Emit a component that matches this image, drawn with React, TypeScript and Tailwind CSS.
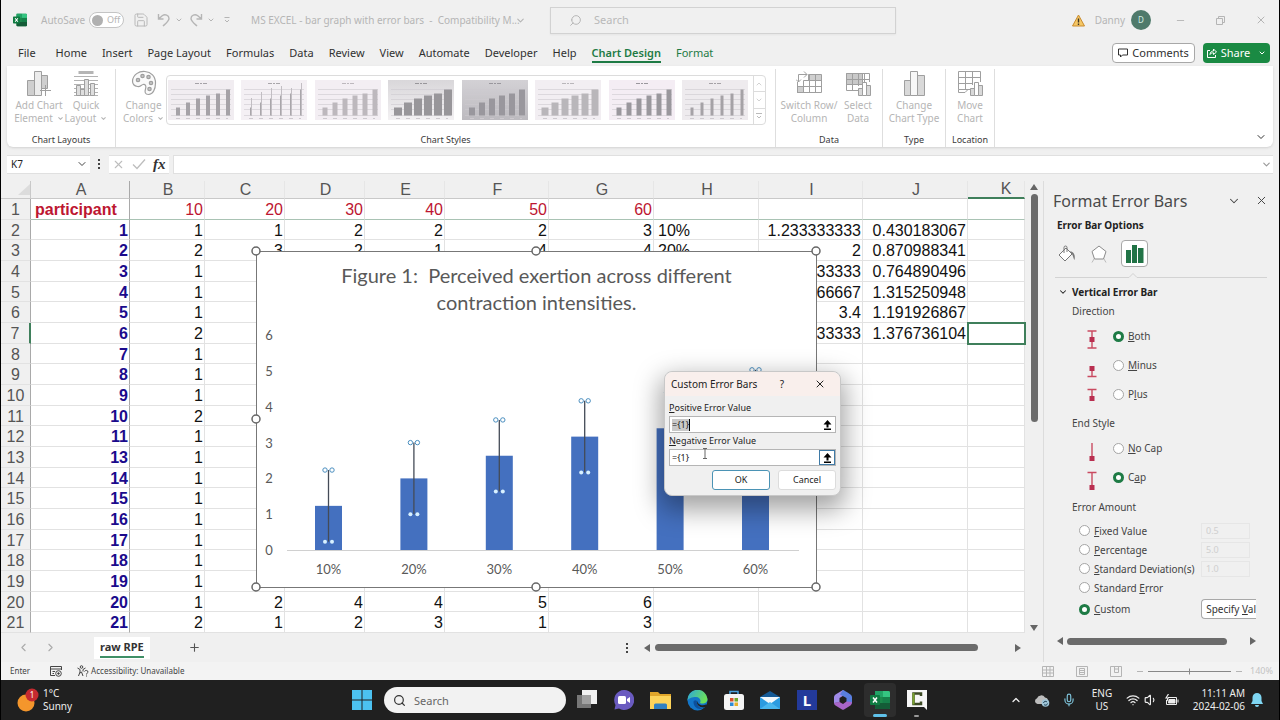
import type { ReactNode } from 'react';
import {
  ChevronDown,
  ChevronLeft,
  ChevronRight,
  ChevronUp,
  Mic,
  Minus,
  Plus,
  Save,
  Search,
  Volume1,
  Wifi,
  X,
} from 'lucide-react';

const TABS = [
  'Home',
  'Insert',
  'Page Layout',
  'Formulas',
  'Data',
  'Review',
  'View',
  'Automate',
  'Developer',
  'Help',
];

const COLUMNS = [
  { id: 'A', width: 'w-[99px]' },
  { id: 'B', width: 'w-[75px]' },
  { id: 'C', width: 'w-20' },
  { id: 'D', width: 'w-20' },
  { id: 'E', width: 'w-20' },
  { id: 'F', width: 'w-[104px]' },
  { id: 'G', width: 'w-[105px]' },
  { id: 'H', width: 'w-[105px]' },
  { id: 'I', width: 'w-[104px]' },
  { id: 'J', width: 'w-[105px]' },
  { id: 'K', width: '' },
];

const ROWS: string[][] = [
  ['participant', '10', '20', '30', '40', '50', '60'],
  ['1', '1', '1', '2', '2', '2', '3', '10%', '1.233333333', '0.430183067'],
  ['2', '2', '3', '2', '1', '4', '4', '20%', '2', '0.870988341'],
  ['3', '1', '', '', '', '', '', '', '2.633333333', '0.764890496'],
  ['4', '1', '', '', '', '', '', '', '3.166666667', '1.315250948'],
  ['5', '1', '', '', '', '', '', '', '3.4', '1.191926867'],
  ['6', '2', '', '', '', '', '', '', '4.033333333', '1.376736104'],
  ['7', '1'],
  ['8', '1'],
  ['9', '1'],
  ['10', '2'],
  ['11', '1'],
  ['13', '1'],
  ['14', '1'],
  ['15', '1'],
  ['16', '1'],
  ['17', '1'],
  ['18', '1'],
  ['19', '1'],
  ['20', '1', '2', '4', '4', '5', '6'],
  ['21', '2', '1', '2', '3', '1', '3'],
];

const BARS = [
  { label: '10%', value: 1.233 },
  { label: '20%', value: 2 },
  { label: '30%', value: 2.633 },
  { label: '40%', value: 3.167 },
  { label: '50%', value: 3.4 },
  { label: '60%', value: 4.033 },
];

const THUMBS = [
  { bg: 'bg-[#f1edf1]', bar: '#a5a2a7', width: 4 },
  { bg: 'bg-[#f4f0f4]', bar: '#a9a6aa', width: 2 },
  { bg: 'bg-[#f3eef3]', bar: '#bdb8bd', width: 5 },
  { bg: 'bg-linear-to-b from-[#d9d7da] to-[#f3f1f3]', bar: '#98969a', width: 8 },
  { bg: 'bg-linear-to-b from-[#d3d1d5] to-[#bcbabf]', bar: '#99979d', width: 6 },
  { bg: 'bg-[#f2eef2]', bar: '#b9b6ba', width: 7 },
  { bg: 'bg-[#f4edf4]', bar: '#9a979d', width: 5 },
  { bg: 'bg-[#eeebee]', bar: '#a5a2a6', width: 3 },
];

function ExcelLogo({ size }: { size: number }) {
  return (
    <svg width={size} height={size} viewBox="0 0 20 20" aria-hidden="true">
      <rect x="5" y="1" width="15" height="18" rx="1.5" fill="#1d8a4c" />
      <path d="M12.500 1H18.500A1.500 1.500 0 0 1 20 2.500V7H12.500Z" fill="#35c481" />
      <path d="M5 1H12.500V7H5Z" fill="#21a366" />
      <path d="M12.500 7H20V13H12.500Z" fill="#16804a" />
      <path d="M5 13H20V17.500A1.500 1.500 0 0 1 18.500 19H6.500A1.500 1.500 0 0 1 5 17.500Z" fill="#145c37" />
      <rect x="0" y="5" width="10" height="10" rx="1" fill="#0f7b41" />
      <path d="M3 7.500L7 12.500M7 7.500L3 12.500" stroke="white" strokeWidth="1.500" />
    </svg>
  );
}

function TitleBar() {
  return (
    <header className="flex h-10 items-center pr-3 pl-3 text-[10px] text-[#b5b5b5]">
      <ExcelLogo size={14} />
      <label className="ml-3.5 flex items-center gap-1">
        AutoSave
        <button
          type="button"
          role="switch"
          aria-checked="false"
          className="flex h-4 w-[35px] items-center gap-1 rounded-full border border-[#c4c4c4] bg-white pl-[2px] text-[9px]"
        >
          <span className="size-[11px] rounded-full bg-[#b0b0b0]" />
          Off
        </button>
      </label>
      <div className="ml-[9px] flex items-center">
        <Save size={16} strokeWidth={1.4} />
        <svg width="14" height="14" viewBox="0 0 14 14" className="ml-2" fill="none" stroke="currentColor" strokeWidth="1.400">
          <path d="M1.500 1V6H6.500M1.500 6L5.500 2.500C8 .8 12 2 12 5.500C12 8 10 9.500 6 13" />
        </svg>
        <ChevronDown size={8} className="ml-1" strokeWidth={3} />
        <svg width="14" height="14" viewBox="0 0 14 14" className="ml-[6px]" fill="none" stroke="currentColor" strokeWidth="1.400">
          <path d="M12.500 1V6H7.500M12.500 6L8.500 2.500C6 .8 2 2 2 5.500C2 8 4 9.500 8 13" />
        </svg>
        <ChevronDown size={8} className="ml-1" strokeWidth={3} />
        <svg width="8" height="8" viewBox="0 0 8 8" className="ml-2" fill="none" stroke="currentColor">
          <path d="M1.500 1.500H6.500M2 4L4 6L6 4" />
        </svg>
      </div>
      <span className="ml-5 w-[264px] whitespace-nowrap">
        MS EXCEL - bar graph with error bars&nbsp; -&nbsp; Compatibility M...
      </span>
      <ChevronDown size={11} className="shrink-0" strokeWidth={2.5} />
      <label className="ml-6 flex h-[27px] w-[346px] items-center gap-3 border border-[#d2d2d2] px-[18px] shadow-xs">
        <Search size={13} strokeWidth={1.8} className="shrink-0 -scale-x-100" />
        <input
          aria-label="Search"
          placeholder="Search"
          className="w-full bg-transparent text-[11px] outline-none placeholder:text-[#b9b9b9]"
        />
      </label>
      <div className="ml-auto flex items-center">
        <svg width="13" height="13" viewBox="0 0 13 13" aria-label="Warning">
          <path d="M6.500 1L12.500 12H.5Z" fill="#f5c765" stroke="#c98b2f" strokeLinejoin="round" />
          <path d="M6.500 4.500V8.500M6.500 9.500V11" stroke="#3d3526" strokeWidth="1.400" />
        </svg>
        <span className="ml-2.5">Danny</span>
        <span className="ml-[6px] flex size-5 items-center justify-center rounded-full bg-[#4f7a6b] text-[8px] text-[#d5efe4]">
          D
        </span>
        <button type="button" aria-label="Minimize" className="ml-6">
          <Minus size={11} strokeWidth={2} />
        </button>
        <button type="button" aria-label="Restore" className="ml-[30px]">
          <svg width="9" height="9" viewBox="0 0 9 9" fill="none" stroke="currentColor">
            <path d="M.5 2.500H6.500V8.500H.5ZM2.500 2.500V.5H8.500V6.500H6.500" />
          </svg>
        </button>
        <button type="button" aria-label="Close" className="ml-[30px]">
          <X size={12} strokeWidth={2} />
        </button>
      </div>
    </header>
  );
}

function TabRow() {
  return (
    <nav className="flex h-[26px] items-center pr-[9px] pl-[17px] text-[11px] text-[#303030]">
      <button type="button" className="mr-5">
        File
      </button>
      <div className="flex gap-[15px]">
        {TABS.map((tab) => (
          <button key={tab} type="button" className="whitespace-nowrap">
            {tab}
          </button>
        ))}
        <button
          type="button"
          className="-mb-0.5 border-b-2 border-[#1e7b45] font-semibold whitespace-nowrap text-[#1e7b45]"
        >
          Chart Design
        </button>
        <button type="button" className="text-[#1e7b45]">
          Format
        </button>
      </div>
      <div className="ml-auto flex items-center gap-2">
        <button
          type="button"
          className="flex h-5 w-[83px] items-center justify-center gap-1 rounded border border-[#a8a8a8] bg-white"
        >
          <svg width="10" height="10" viewBox="0 0 10 10" fill="none" stroke="currentColor">
            <path d="M.5 1H9.500V7H4.500L2.500 9V7H.5Z" />
          </svg>
          Comments
        </button>
        <button
          type="button"
          className="flex h-5 w-[67px] items-center justify-center gap-1 rounded bg-[#1a8a43] text-white"
        >
          <svg width="10" height="10" viewBox="0 0 10 10" fill="none" stroke="currentColor">
            <path d="M3 2.500H.5V9.500H8.500V7M3 6.500C3 4 5 3 6.500 3V1L9.500 4L6.500 6.500V4.800C5 4.800 4 5 3 6.500Z" />
          </svg>
          Share
          <ChevronDown size={8} strokeWidth={3} className="ml-1" />
        </button>
      </div>
    </nav>
  );
}

function Group({ label, width, children }: { label: string; width: string; children: ReactNode }) {
  return (
    <section className={`${width} flex h-[78px] shrink-0 flex-col border-r border-[#dedede]`}>
      <div className="flex flex-1 items-start justify-center">{children}</div>
      <h2 className="h-[14px] text-center text-[9px] leading-[14px] text-[#3a3a3a]">{label}</h2>
    </section>
  );
}

function RibbonButton({
  icon,
  lines,
  width,
  menu,
}: {
  icon: ReactNode;
  lines: [string, string];
  width: string;
  menu?: boolean;
}) {
  return (
    <button
      type="button"
      disabled
      className={`${width} flex flex-col items-center pt-px text-[10px] leading-[13px] whitespace-nowrap text-[#b5b5b5]`}
    >
      <span className="mb-[3px] text-[#9f9f9f]">{icon}</span>
      <span>{lines[0]}</span>
      <span className="flex items-center gap-1">
        {lines[1]}
        {menu && <ChevronDown size={7} strokeWidth={3.5} />}
      </span>
    </button>
  );
}

const columnsIcon = (
  <svg width="26" height="26" viewBox="0 0 26 26" fill="#d9d9d9" stroke="currentColor">
    <path d="M3.500 10.500H9.500V25.500H3.500ZM16.500 5.500H23.500V25.500H16.500Z" />
    <path d="M9.500 1.500H16.500V25.500H9.500Z" fill="#f7f7f7" />
  </svg>
);

const addElementIcon = (
  <svg width="26" height="26" viewBox="0 0 26 26" fill="#cfcfcf" stroke="currentColor">
    <path d="M1.500 10.500H8.500V25.500H1.500ZM15.500 5.500H21.500V18.500H15.500Z" />
    <path d="M8.500 1.500H15.500V25.500H8.500Z" fill="#ececec" />
    <path d="M19.500 15V26M14 20.500H25" />
  </svg>
);

const quickLayoutIcon = (
  <svg width="26" height="26" viewBox="0 0 26 26" fill="none" stroke="currentColor">
    <path d="M5.500 1H20.500V4H5.500Z" fill="#b5b5b5" stroke="none" />
    <path d="M1 6.500H25M1 10.500H25M1 14.500H25M1 18.500H25M1 22.500H25M1 25.500H25" strokeWidth=".8" />
    <path d="M3.500 15.500H7.500V25.500H3.500ZM7.500 19.500H11.500V25.500H7.500ZM11.500 9.500H15.500V25.500H11.500ZM17.500 13.500H21.500V25.500H17.500Z" fill="#dedede" />
  </svg>
);

const paletteIcon = (
  <svg width="26" height="26" viewBox="0 0 26 26" fill="none" stroke="currentColor" strokeWidth="1.200">
    <path d="M1.500 11C2 4.500 8 1 14 1.500C20 2 24.500 6 24.500 13C24.500 19 22 24.500 17.500 24.500C14 24.500 13.500 22 14.500 19C15.500 16 14.500 14 12 14.500C10 15 9.500 17 6.500 16.500C3 16 1.500 14 1.500 11Z" fill="#fafafa" />
    <circle cx="7" cy="10" r="1.700" fill="#c4c4c4" />
    <circle cx="11.500" cy="6" r="1.700" fill="#c4c4c4" />
    <circle cx="17.500" cy="7" r="1.700" fill="#c4c4c4" />
    <circle cx="20" cy="13" r="1.700" fill="#c4c4c4" />
    <circle cx="18.500" cy="19" r="1.700" fill="#c4c4c4" />
  </svg>
);

const switchIcon = (
  <svg width="26" height="26" viewBox="0 0 26 26" fill="none" stroke="currentColor">
    <path d="M12.500 4.500H25.500V10.500H12.500ZM1.500 16.500H7.500V22.500H1.500Z" fill="#cfcfcf" />
    <path d="M7.500 10.500H25.500V16.500H1.500V22.500H25.500V10.500M13.500 4.500V22.500M19.500 4.500V22.500M7.500 10.500V22.500M1.500 22.500V12" />
    <path d="M2.500 12V4.500H11M8 1.500L11 4.500L8 7.500M0 9.500L2.500 12L5 9.500" />
  </svg>
);

const selectDataIcon = (
  <svg width="26" height="26" viewBox="0 0 26 26" fill="none" stroke="currentColor">
    <path d="M1.500 3.500H17.500V14.500H1.500Z" fill="#c9c9c9" />
    <path d="M1.500 3.500H24.500V12M1.500 3.500V20.500H13M1.500 9.500H24.500M1.500 14.500H16M7.500 3.500V20.500M13.500 3.500V16M19.500 3.500V12" />
    <path d="M13.500 18.500H17.500V25.500H13.500ZM21.500 15.500H25.500V25.500H21.500Z" fill="#d9d9d9" />
    <path d="M17.500 12.500H21.500V25.500H17.500Z" fill="white" />
  </svg>
);

const moveChartIcon = (
  <svg width="26" height="26" viewBox="0 0 26 26" fill="none" stroke="currentColor">
    <path d="M1.500 1.500H23.500V12M1.500 1.500V19.500H13M1.500 7.500H23.500M1.500 13.500H16M8.500 1.500V19.500M15.500 1.500V15M1.500 19.500V22.500H8L11 19.500" />
    <path d="M13.500 18.500H17.500V25.500H13.500ZM21.500 15.500H25.500V25.500H21.500Z" fill="#d9d9d9" />
    <path d="M17.500 12.500H21.500V25.500H17.500Z" fill="white" />
  </svg>
);

function StyleThumb({ bg, bar, width, index }: { bg: string; bar: string; width: number; index: number }) {
  return (
    <button type="button" aria-label={`Chart style ${index + 1}`} className={`${bg} h-10 w-[66px]`}>
      <svg width="66" height="40" viewBox="0 0 66 40">
        <path d="M27 3.500H40" stroke={bar} strokeDasharray="4 1 2 1" />
        <path
          d="M3 9.500H63M3 14.500H63M3 19.500H63M3 24.500H63M3 29.500H63M3 35.500H63"
          stroke="#cdc9ce"
          strokeWidth=".6"
        />
        <path d="M8 38.500H60" stroke="#cdc9ce" strokeDasharray="4 6" />
        {[8, 13, 17, 20, 22, 26].map((h, i) => (
          <rect key={h} x={10 + i * 10 - width / 2} y={35.5 - h} width={width} height={h} fill={bar} />
        ))}
        {index === 1 && (
          <path d="M10.500 18V35M20.500 12V35M30.500 8V35M40.500 6V35M50.500 8V35M60.500 3V35" stroke="#c2bec3" />
        )}
      </svg>
    </button>
  );
}

function Ribbon() {
  return (
    <div className="mr-[6px] ml-[6px] flex h-[81px] items-start rounded-b-md bg-white pt-[3px] shadow-sm">
      <Group label="Chart Layouts" width="w-[109px]">
        <RibbonButton icon={addElementIcon} lines={['Add Chart', 'Element']} width="w-[50px]" menu />
        <RibbonButton icon={quickLayoutIcon} lines={['Quick', 'Layout']} width="w-11" menu />
      </Group>
      <Group label="Chart Styles" width="w-[660px]">
        <RibbonButton icon={paletteIcon} lines={['Change', 'Colors']} width="w-11" menu />
        <div className="mr-1 mt-[6px] flex h-[50px] w-[600px] rounded border border-[#dcdcdc]">
          <div className="flex flex-1 items-center justify-between pr-1 pl-px">
            {THUMBS.map((thumb, i) => (
              <StyleThumb key={i} {...thumb} index={i} />
            ))}
          </div>
          <div className="flex w-3 flex-col divide-y divide-[#dcdcdc] border-l border-[#dcdcdc] text-[#bbb]">
            <button type="button" aria-label="Previous styles" className="flex flex-1 items-center justify-center">
              <ChevronUp size={8} />
            </button>
            <button type="button" aria-label="Next styles" className="flex flex-1 items-center justify-center">
              <ChevronDown size={8} />
            </button>
            <button type="button" aria-label="More styles" className="flex flex-1 items-center justify-center">
              <svg width="6" height="6" viewBox="0 0 6 6" fill="none" stroke="currentColor">
                <path d="M0 .5H6M1 3L3 5L5 3" />
              </svg>
            </button>
          </div>
        </div>
      </Group>
      <Group label="Data" width="w-[107px]">
        <RibbonButton icon={switchIcon} lines={['Switch Row/', 'Column']} width="w-[58px]" />
        <RibbonButton icon={selectDataIcon} lines={['Select', 'Data']} width="w-10" />
      </Group>
      <Group label="Type" width="w-[63px]">
        <RibbonButton icon={columnsIcon} lines={['Change', 'Chart Type']} width="w-14" />
      </Group>
      <Group label="Location" width="w-[49px]">
        <RibbonButton icon={moveChartIcon} lines={['Move', 'Chart']} width="w-10" />
      </Group>
      <button type="button" aria-label="Collapse ribbon" className="mr-[6px] mb-1 ml-auto self-end">
        <ChevronDown size={12} strokeWidth={2} className="text-[#333]" />
      </button>
    </div>
  );
}

function Dots() {
  return (
    <svg width="3" height="10" viewBox="0 0 3 10" fill="currentColor">
      <path d="M0 0H2V2H0ZM0 4H2V6H0ZM0 8H2V10H0Z" />
    </svg>
  );
}

function FormulaBar() {
  return (
    <div className="flex h-[34px] items-center pr-[6px] pl-[6px]">
      <div className="flex h-[19px] w-[83px] items-center border-y border-[#e0e0e0] bg-white pr-[2px]">
        <input
          aria-label="Name box"
          defaultValue="K7"
          className="w-full min-w-0 bg-transparent pl-1 text-[10px] text-[#222] outline-none"
        />
        <ChevronDown size={12} strokeWidth={2} className="shrink-0 text-[#444]" />
      </div>
      <span className="mx-2 w-[3px] text-center text-[#444]">
        <Dots />
      </span>
      <div className="flex h-[19px] w-[60px] items-center justify-around border-y border-[#e0e0e0] bg-white text-[#bdbdbd]">
        <X size={13} strokeWidth={2} />
        <svg width="14" height="12" viewBox="0 0 14 12" fill="none" stroke="currentColor" strokeWidth="1.300">
          <path d="M1 6.500L5 10.500L13 1.500" />
        </svg>
        <button
          type="button"
          aria-label="Insert function"
          className="font-['Liberation_Serif',serif] text-[15px] leading-none font-bold text-[#333] italic"
        >
          fx
        </button>
      </div>
      <div className="ml-1 flex h-[19px] flex-1 items-center border-y border-l border-[#e0e0e0] bg-white pr-px">
        <input aria-label="Formula bar" className="w-full bg-transparent text-[11px] outline-none" />
        <ChevronDown size={11} strokeWidth={2.5} className="shrink-0 text-[#999]" />
      </div>
    </div>
  );
}

function cellClass(row: number, col: number, value: string) {
  const tone = row === 0 ? 'text-[#bd1631]' : col === 0 ? 'text-[#1a0a8c]' : 'text-[#111]';
  const weight = col === 0 ? 'font-bold' : 'font-normal';
  const align = value === 'participant' || col === 7 ? 'text-left' : 'text-right';
  const right = col === 0 ? 'border-r-[#a9a9a9]' : 'border-r-[#e2e2e2]';
  const bottom = row === 0 ? 'border-b-[#a9c3b4]' : 'border-b-[#e2e2e2]';
  return `${tone} ${weight} ${align} ${right} ${bottom}`;
}

function Sheet() {
  return (
    <table className="w-full table-fixed border-separate border-spacing-0 font-['Liberation_Sans',sans-serif] text-[16px] leading-none">
      <thead>
        <tr className="h-[18px] text-[#555]">
          <th className="w-[30px] border-r border-b border-[#c9c9c9] p-0">
            <svg width="12" height="11" viewBox="0 0 12 11" className="ml-auto" fill="#dcdcdc">
              <path d="M12 0V11H0Z" />
            </svg>
          </th>
          {COLUMNS.map((col) => (
            <th
              key={col.id}
              className={`${col.width} overflow-hidden border-r border-b p-0 font-normal ${
                col.id === 'A' ? 'border-r-[#a9a9a9]' : 'border-r-[#e6e6e6]'
              } ${col.id === 'K' ? 'border-b-2 border-b-[#3f7f5b] pl-5' : 'border-b-[#c9c9c9] pl-[2px]'}`}
            >
              {col.id}
            </th>
          ))}
        </tr>
      </thead>
      <tbody>
        {ROWS.map((row, r) => (
          <tr key={r} className={r % 3 === 1 ? 'h-5' : 'h-[21px]'}>
            <th
              className={`border-r border-b border-b-[#e2e2e2] bg-[#f0f0f0] px-0 pt-[2px] pb-0 font-normal text-[#555] ${
                r === 6 ? 'border-r-2 border-r-[#3f7f5b]' : 'border-r-[#a9a9a9]'
              }`}
            >
              {r + 1}
            </th>
            {COLUMNS.map((col, c) => {
              const value = row[c] ?? '';
              return (
                <td
                  key={col.id}
                  className={`overflow-hidden border-r border-b bg-white pt-[2px] pr-px pb-0 pl-1 ${cellClass(r, c, value)} ${
                    r === 6 && c === 10 ? 'outline-2 -outline-offset-1 outline-[#3f7f5b]' : ''
                  }`}
                >
                  {value}
                </td>
              );
            })}
          </tr>
        ))}
      </tbody>
    </table>
  );
}

// Chart area in pixels: the zero line sits at y=299 and one unit is about 36px high
function ErrorBarChart() {
  const zero = 299;
  const unit = 35.8;

  return (
    <figure className="absolute top-[70px] left-[255px] h-[337px] w-[561px] border border-[#777] bg-white">
      <figcaption className="pt-[10px] text-center font-[Lato,sans-serif] text-[20px] leading-[27px] text-[#595959]">
        Figure 1:&nbsp; Perceived exertion across different
        <br />
        contraction intensities.
      </figcaption>
      <svg
        width="570"
        height="346"
        viewBox="-5 -5 570 346"
        className="absolute -top-[6px] -left-[6px] font-[Lato,sans-serif] text-[13px]"
        role="img"
        aria-label="Bar chart with error bars"
      >
        {[0, 1, 2, 3, 4, 5, 6].map((n) => (
          <text key={n} x="13" y={zero + 5 - n * unit} textAnchor="middle" fill="#595959">
            {n}
          </text>
        ))}
        <path d="M31 299.500H543" stroke="#d0d0d0" />
        {BARS.map((bar, i) => {
          const x = 72.5 + i * 85.4;
          const top = zero - bar.value * unit;
          return (
            <g key={bar.label}>
              <rect x={x - 13.5} y={top} width="27" height={zero - top} fill="#4470bf" />
              <path d={`M${x} ${top - unit}V${top + unit}`} stroke="#444b57" strokeWidth="1.300" />
              {[-3.5, 3.5].map((dx) => (
                <g key={dx}>
                  <circle cx={x + dx} cy={top - unit} r="2.200" fill="white" stroke="#4b8fc0" />
                  <circle cx={x + dx} cy={top + unit} r="2" fill="#d8f1ff" />
                </g>
              ))}
              <text x={x} y="323" textAnchor="middle" fill="#595959">
                {bar.label}
              </text>
            </g>
          );
        })}
        {[
          [0, 0],
          [280, 0],
          [560, 0],
          [0, 168],
          [0, 336],
          [280, 336],
          [560, 336],
        ].map(([cx, cy]) => (
          <circle key={`${cx}-${cy}`} cx={cx} cy={cy} r="4" fill="white" stroke="#666" strokeWidth="1.500" />
        ))}
      </svg>
    </figure>
  );
}

function RangeField({ id, hotkey, label, selected }: { id: string; hotkey: string; label: string; selected?: boolean }) {
  return (
    <div>
      <label htmlFor={id} className="block h-4 leading-4">
        <u>{hotkey}</u>
        {label}
      </label>
      <div className="flex h-[17px] w-full border border-[#b5b5b5] bg-white">
        <div className="flex flex-1 items-center pl-[2px]">
          <input
            id={id}
            defaultValue="={1}"
            className={`w-[18px] text-[9px] leading-3 outline-none ${
              selected ? 'border-r border-black bg-[#c9c9c9]' : 'bg-transparent'
            }`}
          />
        </div>
        <button
          type="button"
          aria-label="Collapse dialog"
          className={`flex w-4 items-center justify-center ${selected ? '' : 'border border-[#3f7aa6]'}`}
        >
          <svg width="9" height="10" viewBox="0 0 9 10">
            <path d="M4.500 0L8.500 4.500H5.500V7.500H3.500V4.500H.5ZM1 8.500H8V10H1Z" fill="black" />
          </svg>
        </button>
      </div>
    </div>
  );
}

function CustomErrorDialog() {
  return (
    <div
      role="dialog"
      aria-label="Custom Error Bars"
      className="absolute top-[190px] left-[663px] w-[177px] rounded-lg border border-[#c8c8c8] bg-[#f0f0f0] pb-[5px] text-[9px] text-[#222] shadow-[0_10px_26px_4px_rgba(0,0,0,0.36)]"
    >
      <div className="flex h-6 items-center rounded-t-lg bg-[#f9efec] pr-3.5 pl-[6px] text-[10px]">
        Custom Error Bars
        <button type="button" aria-label="Help" className="ml-auto">
          ?
        </button>
        <button type="button" aria-label="Close dialog" className="ml-[30px]">
          <X size={12} strokeWidth={2} />
        </button>
      </div>
      <div className="px-1 pt-1">
        <RangeField id="positive" hotkey="P" label="ositive Error Value" selected />
        <RangeField id="negative" hotkey="N" label="egative Error Value" />
        <div className="mt-1 flex justify-end gap-2">
          <button type="button" className="h-5 w-[58px] rounded-[3px] border border-[#4b93b5] bg-white">
            OK
          </button>
          <button type="button" className="h-5 w-[58px] rounded-[3px] border border-[#dcdcdc] bg-white">
            Cancel
          </button>
        </div>
      </div>
      <svg
        width="6"
        height="11"
        viewBox="0 0 6 11"
        className="absolute top-[76px] left-[37px]"
        fill="none"
        stroke="#666"
      >
        <path d="M1 .5H5M3 .5V10.500M1 10.500H5" />
      </svg>
    </div>
  );
}

function Arrow({ dir }: { dir: 'up' | 'down' | 'left' | 'right' }) {
  const paths = {
    up: 'M4 1L8 7H0Z',
    down: 'M4 7L8 1H0Z',
    left: 'M1 4L7 0V8Z',
    right: 'M7 4L1 0V8Z',
  };
  return (
    <svg width="8" height="8" viewBox="0 0 8 8" fill="#666" className="shrink-0">
      <path d={paths[dir]} />
    </svg>
  );
}

function Radio({
  name,
  pre = '',
  hotkey,
  post,
  checked,
}: {
  name: string;
  pre?: string;
  hotkey: string;
  post: string;
  checked?: boolean;
}) {
  return (
    <label className="flex items-center gap-1 whitespace-nowrap">
      <input
        type="radio"
        name={name}
        defaultChecked={checked}
        className="size-[11px] appearance-none rounded-full border border-[#a5a5a5] bg-white checked:border-3 checked:border-[#1e7b45]"
      />
      <span>
        {pre}
        <u>{hotkey}</u>
        {post}
      </span>
    </label>
  );
}

function BarGlyph({ d, dot }: { d: string; dot: number }) {
  return (
    <svg width="10" height="20" viewBox="0 0 10 20" fill="none" stroke="#c94a60">
      <path d={d} strokeWidth="1.400" />
      <rect x="2.500" y={dot} width="5" height="5" fill="#b92f50" stroke="none" />
    </svg>
  );
}

function GlyphRadio({ glyph, children }: { glyph: ReactNode; children: ReactNode }) {
  return (
    <div className="flex h-[29px] items-start gap-4 pl-[15px]">
      <span className="pt-[7px]">{glyph}</span>
      <span className="pt-[5px]">{children}</span>
    </div>
  );
}

function AmountRow({ children, value }: { children: ReactNode; value?: string }) {
  return (
    <div className="flex h-[19px] items-center justify-between">
      {children}
      {value && (
        <input
          disabled
          aria-label="Amount"
          defaultValue={value}
          className="mr-[6px] h-4 w-[49px] border border-[#e6e6e6] pl-1 text-[9px] text-[#cfcfcf]"
        />
      )}
    </div>
  );
}

function FormatPane() {
  return (
    <aside className="flex w-[236px] shrink-0 flex-col border-l border-[#dcdcdc] pt-[7px] pr-[23px] pl-[9px] text-[10px] leading-4 text-[#444]">
      <div className="flex h-[25px] items-center">
        <h2 className="text-[16px] whitespace-nowrap text-[#4a4a4a]">Format Error Bars</h2>
        <button type="button" aria-label="Pane options" className="ml-auto">
          <ChevronDown size={14} strokeWidth={1.8} />
        </button>
        <button type="button" aria-label="Close pane" className="-mr-3 ml-3.5">
          <X size={13} strokeWidth={1.8} />
        </button>
      </div>
      <h3 className="mt-[3px] h-[18px] pl-1 leading-[18px] font-bold text-[#222]">Error Bar Options</h3>
      <div className="mt-[6px] flex items-center gap-3 pl-1">
        <button type="button" aria-label="Fill and line">
          <svg width="20" height="18" viewBox="0 0 20 18" fill="none" stroke="#777">
            <path d="M2 10L9 3L15 9L8 16Z" fill="white" />
            <path d="M7 8V2.500A1.500 1.500 0 0 1 10 2.500V7" />
            <path d="M13 6C17 7 18.500 10 17.500 15C16.500 14 16.500 12 15 9Z" fill="#777" stroke="none" />
          </svg>
        </button>
        <button type="button" aria-label="Effects">
          <svg width="20" height="18" viewBox="0 0 20 18" fill="none" stroke="#8a8a8a">
            <path d="M10 1L17 6.500L14.500 14H5.500L3 6.500Z" fill="white" />
            <path d="M5 14L3 17.500M15 14L17 17.500" stroke="#bbb" />
          </svg>
        </button>
        <button
          type="button"
          aria-label="Error bar options"
          className="flex size-[27px] items-center justify-center rounded border border-[#a8a8a8] bg-white"
        >
          <svg width="18" height="18" viewBox="0 0 18 18" fill="#217346">
            <path d="M0 5H5V18H0ZM6 0H11V18H6ZM12 3H17.500V18H12Z" />
          </svg>
        </button>
      </div>
      <svg width="214" height="12" viewBox="0 0 214 12" fill="none" stroke="#d3d3d3" className="-mr-3 shrink-0">
        <path d="M2 10.500H76L80 6.500L84 10.500H214" />
      </svg>
      <div className="mt-[5px] flex h-4 items-center gap-1 pl-[5px] font-bold text-[#222]">
        <ChevronDown size={10} strokeWidth={2.5} />
        Vertical Error Bar
      </div>
      <fieldset className="mt-[3px] pl-[19px]">
        <legend className="mb-1 h-4">Direction</legend>
        <GlyphRadio glyph={<BarGlyph d="M.5 1H9.500M5 1V18M.5 18H9.500" dot={7} />}>
          <Radio name="direction" hotkey="B" post="oth" checked />
        </GlyphRadio>
        <GlyphRadio glyph={<BarGlyph d="M5 8V17M.5 17.500H9.500" dot={7} />}>
          <Radio name="direction" hotkey="M" post="inus" />
        </GlyphRadio>
        <GlyphRadio glyph={<BarGlyph d="M.5 1.500H9.500M5 1.500V10" dot={8} />}>
          <Radio name="direction" pre="P" hotkey="l" post="us" />
        </GlyphRadio>
      </fieldset>
      <fieldset className="mt-[5px] pl-[19px]">
        <legend className="mb-1 h-4">End Style</legend>
        <GlyphRadio glyph={<BarGlyph d="M5 1V17" dot={14} />}>
          <Radio name="end" hotkey="N" post="o Cap" />
        </GlyphRadio>
        <GlyphRadio glyph={<BarGlyph d="M.5 1.500H9.500M5 1.500V17" dot={14} />}>
          <Radio name="end" pre="C" hotkey="a" post="p" checked />
        </GlyphRadio>
      </fieldset>
      <fieldset className="mt-[6px] pl-[19px]">
        <legend className="mb-[6px] h-4">Error Amount</legend>
        <div className="pl-[7px]">
          <AmountRow value="0.5">
            <Radio name="amount" hotkey="F" post="ixed Value" />
          </AmountRow>
          <AmountRow value="5.0">
            <Radio name="amount" hotkey="P" post="ercentage" />
          </AmountRow>
          <AmountRow value="1.0">
            <Radio name="amount" hotkey="S" post="tandard Deviation(s)" />
          </AmountRow>
          <AmountRow>
            <Radio name="amount" pre="Standard " hotkey="E" post="rror" />
          </AmountRow>
          <div className="flex h-6 items-center justify-between">
            <Radio name="amount" hotkey="C" post="ustom" checked />
            <button
              type="button"
              className="h-5 rounded-l border border-r-0 border-[#a8a8a8] bg-white pl-1 text-left whitespace-nowrap text-[#333]"
            >
              Specify <u>V</u>al
            </button>
          </div>
        </div>
      </fieldset>
      <div className="-mr-px mt-auto mb-[17px] flex items-center gap-[3px] pl-[3px]">
        <Arrow dir="left" />
        <span className="h-[7px] flex-1 rounded-full bg-[#6b6b6b]" />
        <span className="w-4" />
        <Arrow dir="right" />
      </div>
    </aside>
  );
}

function SheetTabs() {
  return (
    <div className="flex flex-1 items-center pr-[21px] pl-4 text-[#aaa]">
      <ChevronLeft size={13} />
      <ChevronRight size={13} className="ml-[14px]" />
      <button
        type="button"
        className="ml-[37px] flex h-[22px] items-center bg-white px-[6px] text-[11px] font-bold text-[#333]"
      >
        <span className="border-b-2 border-[#3f8f66] leading-[18px] whitespace-nowrap">raw RPE</span>
      </button>
      <button type="button" aria-label="New sheet" className="ml-[38px] text-[#555]">
        <Plus size={13} />
      </button>
      <div className="ml-auto flex items-center gap-1 text-[#444]">
        <Dots />
        <span className="w-[6px]" />
        <Arrow dir="left" />
        <span className="h-[7px] w-[323px] rounded-full bg-[#6b6b6b]" />
        <span className="w-7" />
        <Arrow dir="right" />
      </div>
    </div>
  );
}

function StatusBar() {
  return (
    <footer className="flex h-[18px] items-center bg-[#f3f3f3] pr-[6px] pl-[9px] text-[9px] text-[#444]">
      <span className="text-[8px]">Enter</span>
      <svg width="12" height="11" viewBox="0 0 12 11" fill="none" stroke="currentColor" className="ml-5">
        <path d="M11.500 4V.5H.5V9.500H5M.5 3H11.500M2.500 5.500H5M2.500 7.500H4" />
        <circle cx="8.500" cy="7.500" r="2.800" />
        <circle cx="8.500" cy="7.500" r=".8" fill="currentColor" />
      </svg>
      <svg width="12" height="12" viewBox="0 0 12 12" fill="none" stroke="currentColor" className="mr-[2px] ml-[15px]">
        <circle cx="4.500" cy="2" r="1.300" />
        <path d="M.5 3L3 4.500V7L1.500 11M8.500 3L6 4.500V6.500M3 8L4.500 7L6 11M7.500 6.500C8 5 11 5 11 7C11 8 9.500 8 9.500 9.500M9.500 10.500V11.500" />
      </svg>
      <span className="text-[8px]">Accessibility: Unavailable</span>
      <div className="ml-auto flex items-center text-[#b5b5b5]">
        <svg width="12" height="11" viewBox="0 0 12 11" fill="none" stroke="currentColor">
          <path d="M.5 .5H11.500V10.500H.5ZM.5 4H11.500M.5 7H11.500M4.500 .5V10.500M8 .5V10.500" />
        </svg>
        <svg width="12" height="11" viewBox="0 0 12 11" fill="none" stroke="currentColor" className="ml-[22px]">
          <path d="M.5 .5H11.500V10.500H.5ZM3.500 2.500H8.500V8.500H3.500ZM4 4.500H8M4 6.500H8" />
        </svg>
        <svg width="12" height="11" viewBox="0 0 12 11" fill="none" stroke="currentColor" className="ml-[22px]">
          <path d="M.5 .5H11.500V10.500H.5ZM4.500 .5V6.500H8.500V.5M4.500 3H8.500" />
        </svg>
        <svg width="105" height="7" viewBox="0 0 105 7" className="ml-[15px]" fill="none" stroke="currentColor">
          <path d="M0 3.500H6M99 3.500H105" />
          <path d="M11 3.500H94M52.500 .5V6.500" stroke="#888" />
        </svg>
        <span className="ml-2 text-[#c3c3c3]">140%</span>
      </div>
    </footer>
  );
}

const taskIcons: { name: string; icon: ReactNode }[] = [
  {
    name: 'Task view',
    icon: (
      <svg width="22" height="20" viewBox="0 0 22 20">
        <rect x="6" y="0" width="15" height="14" fill="#f1f1f1" />
        <rect x="1" y="5" width="14" height="13" fill="#8d8d8d" fillOpacity=".8" />
      </svg>
    ),
  },
  {
    name: 'Chat',
    icon: (
      <svg width="20" height="20" viewBox="0 0 20 20">
        <path d="M10 0A10 10 0 1 1 5 18.500L.5 19.500L1.500 15A10 10 0 0 1 10 0Z" fill="#6a5bc0" />
        <rect x="4" y="6" width="8" height="8" rx="1.500" fill="white" />
        <path d="M13 9L16 7V13L13 11Z" fill="white" />
      </svg>
    ),
  },
  {
    name: 'File Explorer',
    icon: (
      <svg width="21" height="19" viewBox="0 0 21 19">
        <path d="M0 1H8L10 3H21V18H0Z" fill="#e0a52a" />
        <path d="M0 5H21V18H0Z" fill="#fcd35a" />
        <path d="M4 18V14A1.500 1.500 0 0 1 5.500 12.500H15.500A1.500 1.500 0 0 1 17 14V18Z" fill="#2f80c2" />
      </svg>
    ),
  },
  {
    name: 'Edge',
    icon: (
      <svg width="21" height="21" viewBox="0 0 21 21">
        <defs>
          <linearGradient id="edgeTop" x1="0" y1="0" x2="1" y2=".4">
            <stop offset="0" stopColor="#2aa5e0" />
            <stop offset="1" stopColor="#6be05a" />
          </linearGradient>
        </defs>
        <circle cx="10.500" cy="10.500" r="10" fill="#1375c8" />
        <path d="M.5 10.500A10 10 0 0 1 20.500 9C20.500 13 16 14.500 13 13C14.500 10 12.500 7 9 7C5 7 1.500 8.500 .5 10.500Z" fill="url(#edgeTop)" />
        <path d="M6.500 12C6.500 17 11 20 15.500 18.500C12 17.500 9.500 15 9.800 11C8.500 9.500 6.500 10.500 6.500 12Z" fill="#0c4f9c" />
        <path d="M10 10.500C10.500 14.500 15 16.500 19 14.500L20 15.500L19 17C14 18.500 9 15.500 10 10.500Z" fill="#202020" />
      </svg>
    ),
  },
  {
    name: 'Microsoft Store',
    icon: (
      <svg width="20" height="20" viewBox="0 0 20 20">
        <path d="M6 4V1.500H14V4" fill="none" stroke="#4aa3df" strokeWidth="1.500" />
        <rect x="0" y="4" width="20" height="16" rx="2.500" fill="#f4f4f4" />
        <path d="M6 8H9.500V11.500H6Z" fill="#d8502c" />
        <path d="M10.500 8H14V11.500H10.500Z" fill="#6ca82e" />
        <path d="M6 12.500H9.500V16H6Z" fill="#2c8bd8" />
        <path d="M10.500 12.500H14V16H10.500Z" fill="#e8b02c" />
      </svg>
    ),
  },
  {
    name: 'Mail',
    icon: (
      <svg width="20" height="18" viewBox="0 0 20 18">
        <path d="M0 6L10 0L20 6V9H0Z" fill="#155a96" />
        <path d="M0 6H20V18H0Z" fill="#2c9be0" />
        <path d="M0 6H20L10 13Z" fill="#f3f8fc" />
        <path d="M0 18L10 11L20 18Z" fill="#4ab6ee" />
      </svg>
    ),
  },
  {
    name: 'L',
    icon: (
      <span className="flex size-5 items-center justify-center bg-[#233a9b] text-[15px] leading-none font-bold text-white">
        L
      </span>
    ),
  },
  {
    name: 'Microsoft 365',
    icon: (
      <svg width="18" height="20" viewBox="0 0 18 20">
        <path d="M9 0L1.500 4.500Q0 5.500 0 7V13L5.500 12.500V8L12 4Z" fill="#a08be8" />
        <path d="M9 0Q10 0 16.500 4.500Q18 5.500 18 7V13.500L12.500 12V8L6 4.500Z" fill="#5a7fe0" />
        <path d="M0 13Q0 14.500 1.500 15.500L8 19.500Q9 20 10 19.500L16.500 15.500Q18 14.500 18 12L12.500 11.500L9 14L5.500 12Z" fill="#a865c8" />
      </svg>
    ),
  },
  { name: 'Excel', icon: <ExcelLogo size={20} /> },
  {
    name: 'Camtasia',
    icon: (
      <svg width="20" height="20" viewBox="0 0 20 20">
        <path d="M0 0H20V20L17 17H0Z" fill="#f6f6f6" />
        <path d="M14 6V3.500H6.500V14H14V11.500" fill="none" stroke="#3d4a25" strokeWidth="2.500" />
        <path d="M6.500 3V14.500" stroke="#7ba32f" strokeWidth="2" />
      </svg>
    ),
  },
];

function Taskbar() {
  return (
    <footer className="flex h-10 items-center bg-[#202020] pr-4 pl-4 text-[10px] leading-[13px] text-[#eee]">
      <div className="flex w-[335px] items-center gap-1">
        <svg width="22" height="24" viewBox="0 0 22 24">
          <circle cx="9" cy="15" r="8.500" fill="#f4962c" />
          <circle cx="15" cy="7" r="6.500" fill="#c52a30" />
          <text x="15" y="10" textAnchor="middle" fontSize="8" fill="white">
            1
          </text>
        </svg>
        <span>
          1°C
          <br />
          Sunny
        </span>
      </div>
      <button type="button" aria-label="Start">
        <svg width="20" height="20" viewBox="0 0 20 20" fill="#4cc2f1">
          <path d="M0 0H9.500V9.500H0ZM10.500 0H20V9.500H10.500ZM0 10.500H9.500V20H0ZM10.500 10.500H20V20H10.500Z" />
        </svg>
      </button>
      <label className="ml-3 flex h-[26px] w-[182px] items-center gap-2 rounded-full bg-[#f2f2f2] px-[9px] text-[#333]">
        <Search size={13} strokeWidth={2.2} className="shrink-0" />
        <input
          aria-label="Search the taskbar"
          placeholder="Search"
          className="w-full min-w-0 text-[11px] outline-none placeholder:text-[#666]"
        />
      </label>
      <div className="ml-[3px] grid w-[366px] grid-cols-10">
        {taskIcons.map(({ name, icon }) => (
          <button
            key={name}
            type="button"
            aria-label={name}
            className={`relative mx-auto flex h-[34px] w-8 items-center justify-center rounded ${
              name === 'Excel' ? 'bg-[#2d2d2d]' : ''
            }`}
          >
            {icon}
            {name === 'Excel' && <span className="absolute bottom-0 h-[3px] w-[14px] rounded-full bg-[#5fc1ea]" />}
            {name === 'Camtasia' && <span className="absolute bottom-0 h-[2px] w-[5px] rounded-full bg-[#999]" />}
          </button>
        ))}
      </div>
      <div className="ml-auto flex items-center">
        <ChevronUp size={12} strokeWidth={2.5} />
        <svg width="16" height="13" viewBox="0 0 16 13" className="ml-3">
          <path d="M3.500 10A3 3 0 0 1 3 4.200A4.500 4.500 0 0 1 11 3.500A3.500 3.500 0 0 1 12.500 10Z" fill="#bdbdbd" />
          <circle cx="11.500" cy="9" r="3.800" fill="#9fc5d8" />
          <path d="M9.500 9A2 2 0 0 1 13 8M13.500 9.500A2 2 0 0 1 10 10.500" fill="none" stroke="#26485c" />
        </svg>
        <Mic size={14} className="ml-3 text-[#7ec3da]" />
        <span className="ml-4 w-5 text-center">
          ENG
          <br />
          US
        </span>
        <Wifi size={14} strokeWidth={2.2} className="ml-[14px]" />
        <Volume1 size={14} className="ml-1" />
        <svg width="14" height="12" viewBox="0 0 14 12" className="ml-[7px]" fill="none" stroke="currentColor">
          <path d="M3 3.500H11.500V10.500H1.500V6M13 5.500V8.500" />
          <path d="M4 5.500H10V9H3.500Z" fill="currentColor" />
          <path d="M3.500 0L1 4H3L2 7" strokeWidth="1.200" />
        </svg>
        <span className="ml-3.5 text-right whitespace-nowrap">
          11:11 AM
          <br />
          2024-02-06
        </span>
        <svg width="12" height="14" viewBox="0 0 12 14" fill="#7fd6f2" className="ml-[6px]">
          <path d="M6 0A4.500 4.500 0 0 1 10.500 4.500V8L12 11H0L1.500 8V4.500A4.500 4.500 0 0 1 6 0ZM4 12H8A2 2 0 0 1 4 12Z" />
        </svg>
      </div>
    </footer>
  );
}

export default function App() {
  return (
    <div className="flex min-h-screen w-full flex-col border-x border-black bg-[#f0f0f0] font-['Noto_Sans',sans-serif]">
      <TitleBar />
      <TabRow />
      <Ribbon />
      <FormulaBar />
      <main className="flex flex-1">
        <div className="flex min-w-0 flex-1 flex-col">
          <div className="flex">
            <div className="relative min-w-0 flex-1">
              <Sheet />
              <ErrorBarChart />
              <CustomErrorDialog />
            </div>
            <div className="flex w-[18px] flex-col items-center gap-[3px] pt-[2px] pb-px">
              <Arrow dir="up" />
              <span className="h-[228px] w-[7px] rounded-full bg-[#6b6b6b]" />
              <span className="flex-1" />
              <Arrow dir="down" />
            </div>
          </div>
          <SheetTabs />
        </div>
        <FormatPane />
      </main>
      <StatusBar />
      <Taskbar />
    </div>
  );
}
